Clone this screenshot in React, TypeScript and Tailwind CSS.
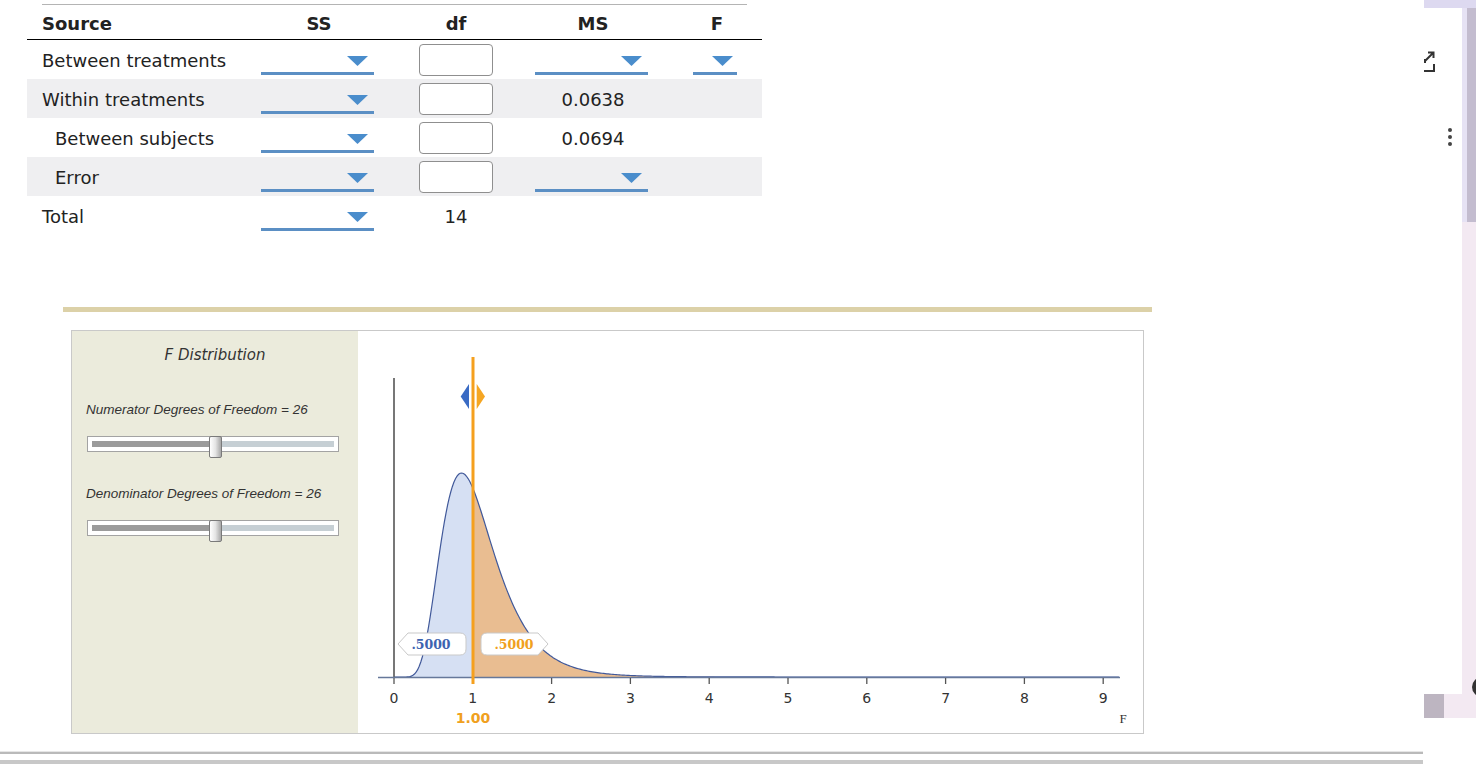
import React from "react";

const rows = [
  { label: "Between treatments", indent: false, shade: false, ss: true, df: "input", ms: "drop", f: true },
  { label: "Within treatments", indent: false, shade: true, ss: true, df: "input", ms: "0.0638", f: false },
  { label: "Between subjects", indent: true, shade: false, ss: true, df: "input", ms: "0.0694", f: false },
  { label: "Error", indent: true, shade: true, ss: true, df: "input", ms: "drop", f: false },
  { label: "Total", indent: false, shade: false, ss: true, df: "14", ms: "", f: false },
];

function Arrow() {
  return (
    <svg width="21" height="10" viewBox="0 0 21 10">
      <polygon points="0,0 21,0 10.5,10" fill="#4a8dcc" />
    </svg>
  );
}

function Dropdown({ narrow }: { narrow?: boolean }) {
  return (
    <div
      className={`${narrow ? "w-[44px] pr-[4px]" : "w-[113px] pr-[6px]"} h-[30px] border-b-[3px] border-[#5b8fc4] flex items-end justify-end pb-[6px]`}
    >
      <Arrow />
    </div>
  );
}

function AnovaTable() {
  return (
    <div className="pt-[4px] pl-[27px] w-[762px] font-['DejaVu_Sans',Verdana,sans-serif] text-[18px] text-[#222]">
      <div className="mx-[15px] h-px bg-[#b4b4b4]" />
      <div className="flex h-[35px] items-center border-b border-black font-bold">
        <div className="w-[223px] pl-[15px] pt-[2px]">Source</div>
        <div className="w-[138px] text-center pt-[2px]">SS</div>
        <div className="w-[136px] text-center pt-[2px]">df</div>
        <div className="w-[138px] text-center pt-[2px]">MS</div>
        <div className="w-[100px] pl-[10px] text-center pt-[2px]">F</div>
      </div>
      {rows.map((r) => (
        <div key={r.label} className={`flex h-[39px] items-center ${r.shade ? "bg-[#efeff1]" : ""}`}>
          <div className={`w-[223px] pt-[2px] ${r.indent ? "pl-[28px]" : "pl-[15px]"}`}>{r.label}</div>
          <div className="w-[138px] flex pl-[11px]">{r.ss && <Dropdown />}</div>
          <div className="w-[136px] flex justify-center">
            {r.df === "input" ? (
              <div className="w-[74px] h-[32px] rounded-[4px] border border-[#8f8f8f] bg-white" />
            ) : (
              <span className="pt-[2px]">{r.df}</span>
            )}
          </div>
          <div className={`w-[138px] flex ${r.ms === "drop" ? "pl-[11px]" : "justify-center pt-[2px]"}`}>
            {r.ms === "drop" ? <Dropdown /> : <span>{r.ms}</span>}
          </div>
          <div className="w-[100px] pl-[31px] flex">{r.f && <Dropdown narrow />}</div>
        </div>
      ))}
    </div>
  );
}

function Slider() {
  return (
    <div className="relative w-[252px] h-[22px]">
      <div className="mt-[3px] h-[16px] border border-[#a3a3a3] bg-white px-[4px] py-[4px] flex">
        <div className="w-[121px] h-[6px] bg-[#9b9b9b]" />
        <div className="flex-1 h-[6px] ml-[7px] bg-[#c6cfd4]" />
      </div>
      <div className="absolute left-[122px] top-0 w-[13px] h-[22px] rounded-[2px] border border-[#7a7a7a] bg-gradient-to-r from-[#ffffff] via-[#e4e4e4] to-[#a8a8a8]" />
    </div>
  );
}

const X0 = 36;
const U = 78.8;
const BASE = 346;
const PEAK = 204;

function pdf(x: number) {
  if (x <= 0) return 0;
  return Math.exp(12 * Math.log(x) - 26 * Math.log(1 + x));
}

function Chart() {
  const max = pdf(6 / 7);
  const px = (f: number) => X0 + U * f;
  const py = (f: number) => BASE - (pdf(f) / max) * PEAK;
  const left: string[] = [];
  const right: string[] = [];
  const all: string[] = [];
  for (let i = 0; i <= 460; i++) {
    const f = i * 0.02;
    const p = `${px(f).toFixed(2)},${py(f).toFixed(2)}`;
    all.push(p);
    if (f <= 1.0001) left.push(p);
    if (f >= 0.9999) right.push(p);
  }
  const blue = `M${px(0)},${BASE} L${left.join(" L")} L${px(1)},${BASE} Z`;
  const orange = `M${px(1)},${BASE} L${right.join(" L")} L${px(9.2)},${BASE} Z`;
  const curve = `M${all.join(" L")}`;
  return (
    <svg width="785" height="402" viewBox="0 0 785 402" className="block">
      <path d={blue} fill="#d6e0f3" />
      <path d={orange} fill="#e9bd91" />
      <path d={curve} fill="none" stroke="#41599a" strokeWidth="1.2" />
      <line x1="36" y1="47" x2="36" y2="347" stroke="#555" strokeWidth="1.6" />
      <line x1="20" y1="346.5" x2="762" y2="346.5" stroke="#66789a" strokeWidth="1.5" />
      {Array.from({ length: 10 }, (_, i) => (
        <g key={i}>
          <line x1={px(i)} y1="347" x2={px(i)} y2="353" stroke="#555" strokeWidth="1.3" />
          <text
            x={px(i)}
            y="372"
            textAnchor="middle"
            fontSize="14"
            fill="#333"
            fontFamily="DejaVu Sans, Verdana, sans-serif"
          >
            {i}
          </text>
        </g>
      ))}
      <line x1="115" y1="26" x2="115" y2="353" stroke="#f5a01e" strokeWidth="3" />
      <path d="M111,53 L102.7,65.5 L111,78 Z" fill="#3a6bc4" />
      <path d="M118.7,53 L127,65.5 L118.7,78 Z" fill="#f5a623" />
      <path
        d="M40,313 L50,302 H102 Q108,302 108,308 V318 Q108,324 102,324 H50 Z"
        fill="#fff"
        stroke="#c9c9c9"
      />
      <path
        d="M129,302 H180 L190,313 L180,324 H129 Q123,324 123,318 V308 Q123,302 129,302 Z"
        fill="#fff"
        stroke="#c9c9c9"
      />
      <text x="73" y="318" textAnchor="middle" fontSize="12.5" fontWeight="bold" fill="#3d63b0" fontFamily="DejaVu Serif, Georgia, serif">
        .5000
      </text>
      <text x="156" y="318" textAnchor="middle" fontSize="12.5" fontWeight="bold" fill="#f0a020" fontFamily="DejaVu Serif, Georgia, serif">
        .5000
      </text>
      <text x="115" y="392" textAnchor="middle" fontSize="14" fontWeight="bold" fill="#f0a020" fontFamily="DejaVu Sans, Verdana, sans-serif">
        1.00
      </text>
      <text x="765" y="392" textAnchor="middle" fontSize="13" fill="#333" fontFamily="Liberation Serif, serif">
        F
      </text>
    </svg>
  );
}

function FDistribution() {
  return (
    <div className="ml-[71px] mt-[18px] w-[1073px] h-[404px] border border-[#c9c9c9] flex">
      <div className="w-[286px] bg-[#ebebdc] text-[#333]">
        <div className="mt-[15px] text-center leading-[18px] text-[15px] italic font-['DejaVu_Sans',Verdana,sans-serif]">
          F Distribution
        </div>
        <div className="pl-[14px] font-['Liberation_Sans',Arial,sans-serif] italic text-[13.5px]">
          <div className="mt-[38px] leading-[16px]">Numerator Degrees of Freedom = 26</div>
          <div className="mt-[18px] pl-[1px]">
            <Slider />
          </div>
          <div className="mt-[28px] leading-[16px]">Denominator Degrees of Freedom = 26</div>
          <div className="mt-[18px] pl-[1px]">
            <Slider />
          </div>
        </div>
      </div>
      <div className="flex-1 bg-white">
        <Chart />
      </div>
    </div>
  );
}

function SideStrip() {
  return (
    <div className="w-[52px] h-full flex flex-col">
      <div className="h-[8px] bg-[#ddd9f0]" />
      <div className="h-[686px] flex relative">
        <div className="w-[38px] bg-white flex flex-col items-start">
          <svg width="14" height="22" viewBox="0 0 14 22" className="mt-[42px] -ml-[2px]">
            <path d="M3,11 L11,3 M6,2.5 H11.5 V8" fill="none" stroke="#333" strokeWidth="2" />
            <path d="M3,9 V13 M12,14 V21 H2" fill="none" stroke="#333" strokeWidth="2" />
          </svg>
          <div className="ml-[24px] mt-[56px] flex flex-col gap-[3px]">
            <div className="w-[4px] h-[4px] rounded-full bg-[#444]" />
            <div className="w-[4px] h-[4px] rounded-full bg-[#444]" />
            <div className="w-[4px] h-[4px] rounded-full bg-[#444]" />
          </div>
        </div>
        <div className="flex-1 flex flex-col">
          <div className="h-[214px] flex">
            <div className="w-[5px] bg-[#e6e2f4]" />
            <div className="flex-1 bg-[#c3bccf]" />
          </div>
          <div className="flex-1 bg-[#f3e9f2]" />
        </div>
        <div className="absolute left-[48px] top-[669px] w-[20px] h-[20px] rounded-full bg-[#333]" />
      </div>
      <div className="h-[24px] flex">
        <div className="w-[20px] bg-[#bdb5c1]" />
        <div className="flex-1 bg-[#f3e9f2]" />
      </div>
      <div className="flex-1 bg-white" />
    </div>
  );
}

export default function App() {
  return (
    <div className="w-[1476px] h-[764px] overflow-hidden bg-white flex">
      <div className="w-[1424px] flex flex-col">
        <AnovaTable />
        <div className="mt-[72px] ml-[63px] w-[1089px] h-[5px] bg-[#dcd1a8]" />
        <FDistribution />
        <div className="mt-[17px] w-[1423px]">
          <div className="h-px bg-[#e6e6e6]" />
          <div className="h-[2px] bg-[#bababa]" />
          <div className="mt-[6px] h-[4px] bg-[#c8c8c8]" />
        </div>
      </div>
      <SideStrip />
    </div>
  );
}
